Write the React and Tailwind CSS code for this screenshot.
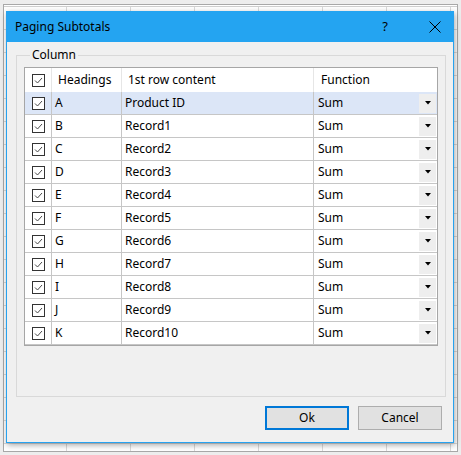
import React from "react";

const rows = [
  ["A", "Product ID"],
  ["B", "Record1"],
  ["C", "Record2"],
  ["D", "Record3"],
  ["E", "Record4"],
  ["F", "Record5"],
  ["G", "Record6"],
  ["H", "Record7"],
  ["I", "Record8"],
  ["J", "Record9"],
  ["K", "Record10"],
];

function CheckBox() {
  return (
    <div className="w-[13px] h-[13px] border border-[#333333] bg-white flex items-center justify-center">
      <svg width="11" height="11" viewBox="0 0 11 11">
        <path d="M2 5.5 L4.5 8 L9 3" fill="none" stroke="#4a4a4a" strokeWidth="1" />
      </svg>
    </div>
  );
}

function DropButton() {
  return (
    <div className="w-[17px] h-[19px] bg-[#eeeeee] flex items-center justify-center">
      <svg width="6" height="4" viewBox="0 0 6 4">
        <path d="M0 0 H6 L3 3.5 Z" fill="#000000" />
      </svg>
    </div>
  );
}

function Sheet() {
  const cols = [64, 64, 64, 64, 64, 64, 64, 5];
  return (
    <div className="w-[455px] h-[448px] border border-[#a8a8a8] bg-white overflow-hidden">
      <div className="h-[2px] border-b border-[#cfcfcf]" />
      {Array.from({ length: 20 }).map((_, r) => (
        <div key={r} className="flex h-[23px] border-b border-[#dadada]">
          {cols.map((w, c) => (
            <div
              key={c}
              className={c === 0 ? "w-[63px] border-r border-[#dadada]" : w === 5 ? "flex-1" : "w-[64px] border-r border-[#dadada]"}
            />
          ))}
        </div>
      ))}
    </div>
  );
}

export default function App() {
  return (
    <div
      className="relative w-[461px] h-[455px] overflow-hidden bg-[#ededed] pt-[4px] pl-[3px] text-[12px] text-black"
      style={{ fontFamily: '"Segoe UI", "Noto Sans", sans-serif' }}
    >
      <Sheet />

      {/* dialog window */}
      <div className="absolute left-[6px] top-[11px] w-[448px] h-[432px] border border-[#27a2ef] bg-[#f0f0f0] shadow-[1px_2px_6px_rgba(0,0,0,0.35)] flex flex-col">
        <div className="h-[31px] -mt-px bg-[#24a4f1] flex items-center pl-[8px] pr-[12px] shrink-0">
          <span className="flex-1 text-[12px] leading-none">Paging Subtotals</span>
          <span className="text-[13px] leading-none mr-[41px]">?</span>
          <svg width="12" height="12" viewBox="0 0 12 12">
            <path d="M0.5 0.5 L11.5 11.5 M11.5 0.5 L0.5 11.5" stroke="#000000" strokeWidth="1" />
          </svg>
        </div>

        <div className="flex-1 flex flex-col px-[9px] pt-[5px]">
          <fieldset className="border border-[#d9d9d9] px-[7px] pb-[8px] pt-[4px] h-[350px] mr-[-2px]">
            <legend className="ml-[6px] px-[2px] leading-[16px]">Column</legend>
            <div className="h-full border border-[#a6a6a6] bg-white">
              <div className="flex h-[24px] items-center">
                <div className="w-[27px] h-full border-r border-[#e6e6e6] flex items-center justify-center pl-[1px]">
                  <CheckBox />
                </div>
                <div className="w-[70px] h-full border-r border-[#e6e6e6] flex items-center pl-[6px]">Headings</div>
                <div className="w-[192px] h-full border-r border-[#e6e6e6] flex items-center pl-[6px]">1st row content</div>
                <div className="flex-1 h-full flex items-center pl-[7px]">Function</div>
              </div>
              {rows.map(([h, c], i) => (
                <div
                  key={h}
                  className={`flex h-[23px] border-b border-[#c6c6c6] ${i === 0 ? "bg-[#dce6f7]" : "bg-white"}`}
                >
                  <div className="w-[27px] border-r border-[#c6c6c6] flex items-center justify-center pl-[1px]">
                    <CheckBox />
                  </div>
                  <div className="w-[70px] border-r border-[#c6c6c6] flex items-center pl-[3px]">{h}</div>
                  <div className="w-[192px] border-r border-[#c6c6c6] flex items-center pl-[3px]">{c}</div>
                  <div className="flex-1 flex items-center pl-[4px] pr-[1px]">
                    <span className="flex-1">Sum</span>
                    <DropButton />
                  </div>
                </div>
              ))}
            </div>
          </fieldset>

          <div className="flex justify-end gap-[9px] mt-[9px] mr-[2px]">
            <button className="w-[84px] h-[24px] border-2 border-[#0078d7] bg-[#e1e1e1]">Ok</button>
            <button className="w-[84px] h-[24px] border border-[#adadad] bg-[#e1e1e1]">Cancel</button>
          </div>
        </div>
      </div>
    </div>
  );
}
